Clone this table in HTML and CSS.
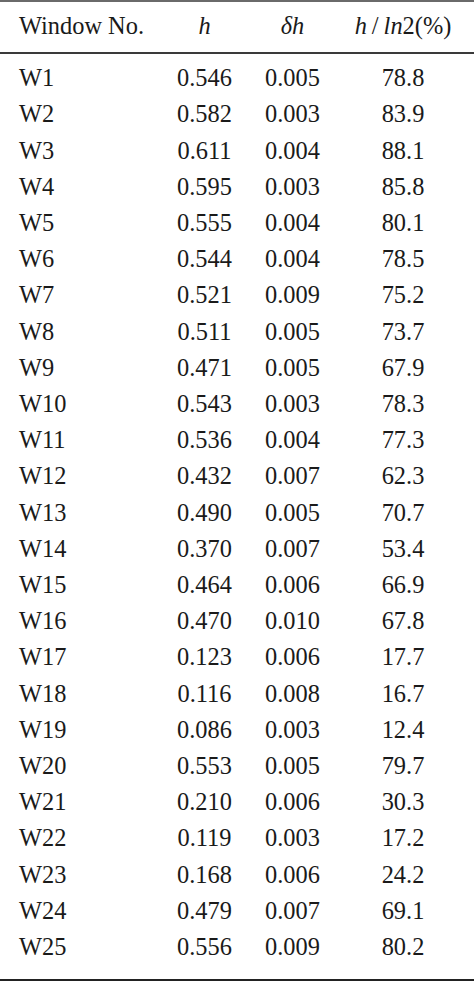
FILE: index.html
```html
<!DOCTYPE html>
<html>
<head>
<meta charset="utf-8">
<link rel="stylesheet" href="styles.css">
</head>
<body>
<table class="tbl">
  <colgroup>
    <col class="c1"><col class="c2"><col class="c3"><col class="c4">
  </colgroup>
  <thead>
    <tr>
      <th class="name">Window No.</th>
      <th><i>h</i></th>
      <th><i>δh</i></th>
      <th class="last"><i>h</i><span class="sl">/</span><i>ln</i>2(%)</th>
    </tr>
  </thead>
  <tbody>
    <tr><td class="name">W1</td><td>0.546</td><td>0.005</td><td class="last">78.8</td></tr>
    <tr><td class="name">W2</td><td>0.582</td><td>0.003</td><td class="last">83.9</td></tr>
    <tr><td class="name">W3</td><td>0.611</td><td>0.004</td><td class="last">88.1</td></tr>
    <tr><td class="name">W4</td><td>0.595</td><td>0.003</td><td class="last">85.8</td></tr>
    <tr><td class="name">W5</td><td>0.555</td><td>0.004</td><td class="last">80.1</td></tr>
    <tr><td class="name">W6</td><td>0.544</td><td>0.004</td><td class="last">78.5</td></tr>
    <tr><td class="name">W7</td><td>0.521</td><td>0.009</td><td class="last">75.2</td></tr>
    <tr><td class="name">W8</td><td>0.511</td><td>0.005</td><td class="last">73.7</td></tr>
    <tr><td class="name">W9</td><td>0.471</td><td>0.005</td><td class="last">67.9</td></tr>
    <tr><td class="name">W10</td><td>0.543</td><td>0.003</td><td class="last">78.3</td></tr>
    <tr><td class="name">W11</td><td>0.536</td><td>0.004</td><td class="last">77.3</td></tr>
    <tr><td class="name">W12</td><td>0.432</td><td>0.007</td><td class="last">62.3</td></tr>
    <tr><td class="name">W13</td><td>0.490</td><td>0.005</td><td class="last">70.7</td></tr>
    <tr><td class="name">W14</td><td>0.370</td><td>0.007</td><td class="last">53.4</td></tr>
    <tr><td class="name">W15</td><td>0.464</td><td>0.006</td><td class="last">66.9</td></tr>
    <tr><td class="name">W16</td><td>0.470</td><td>0.010</td><td class="last">67.8</td></tr>
    <tr><td class="name">W17</td><td>0.123</td><td>0.006</td><td class="last">17.7</td></tr>
    <tr><td class="name">W18</td><td>0.116</td><td>0.008</td><td class="last">16.7</td></tr>
    <tr><td class="name">W19</td><td>0.086</td><td>0.003</td><td class="last">12.4</td></tr>
    <tr><td class="name">W20</td><td>0.553</td><td>0.005</td><td class="last">79.7</td></tr>
    <tr><td class="name">W21</td><td>0.210</td><td>0.006</td><td class="last">30.3</td></tr>
    <tr><td class="name">W22</td><td>0.119</td><td>0.003</td><td class="last">17.2</td></tr>
    <tr><td class="name">W23</td><td>0.168</td><td>0.006</td><td class="last">24.2</td></tr>
    <tr><td class="name">W24</td><td>0.479</td><td>0.007</td><td class="last">69.1</td></tr>
    <tr><td class="name">W25</td><td>0.556</td><td>0.009</td><td class="last">80.2</td></tr>
  </tbody>
</table>
</body>
</html>
```
FILE: styles.css
```css
html, body {
  margin: 0;
  padding: 0;
  background: #ffffff;
}
.tbl {
  width: 474px;
  border-collapse: collapse;
  table-layout: fixed;
  font-family: "Liberation Serif", "Times New Roman", serif;
  font-size: 24.4px;
  color: #1a1a1a;
  border-top: 2.5px solid #6a6a6a;
  border-bottom: 3px solid #222222;
}
.c1 { width: 160px; }
.c2 { width: 89px; }
.c3 { width: 87px; }
.c4 { width: 138px; }
.tbl th, .tbl td {
  padding: 0;
  line-height: 36.2px;
  text-align: center;
  font-weight: normal;
  white-space: nowrap;
}
.tbl .name {
  text-align: left;
  padding-left: 19px;
}
.tbl .last {
  padding-right: 4px;
}
.tbl thead th {
  padding-top: 6px;
  padding-bottom: 8px;
  border-bottom: 2px solid #3a3a3a;
}
.tbl tbody tr:first-child td {
  padding-top: 6px;
}
.tbl tbody tr:last-child td {
  padding-bottom: 14px;
}
.sl {
  padding: 0 5px;
}
```
